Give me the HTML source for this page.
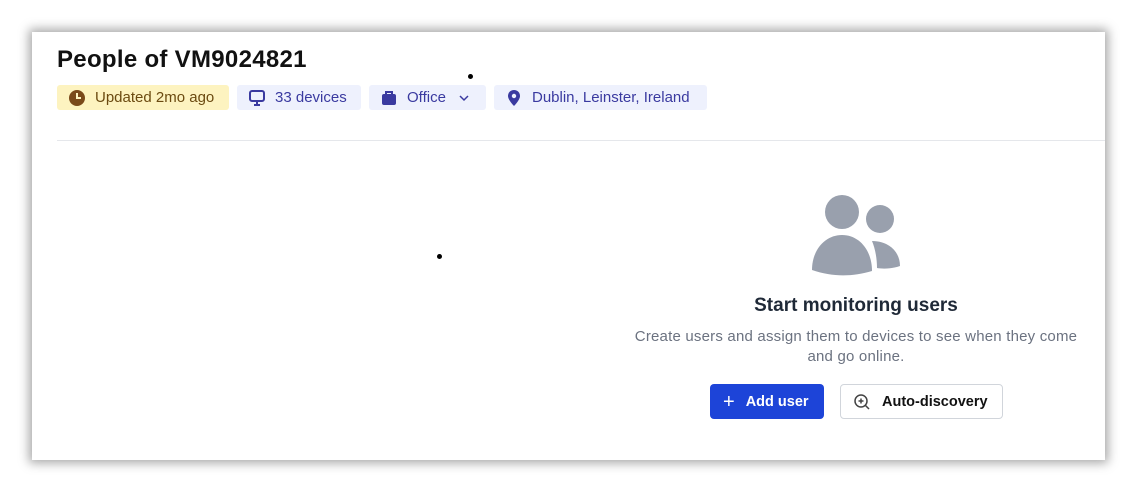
<!DOCTYPE html>
<html><head><style>
*{margin:0;padding:0;box-sizing:border-box}
body{width:1137px;height:492px;background:#fff;font-family:"Liberation Sans",sans-serif;position:relative;overflow:hidden}
.card{position:absolute;left:32px;top:32px;width:1073px;height:428px;background:#fff;box-shadow:0 0 10px 3px rgba(0,0,0,.35)}
h1{position:absolute;left:57px;top:46px;font-size:24px;font-weight:bold;color:#111;letter-spacing:0.3px}
.b{position:absolute;top:85px;height:25px;border-radius:3px;background:#eef1fd;color:#3a3aa0;font-size:15px;line-height:26px;padding-left:38px}
.b svg{position:absolute;left:11px;top:4px}
.hr{position:absolute;left:57px;top:140px;width:1048px;height:1px;background:#e5e7eb}
.dot{position:absolute;width:5px;height:5px;border-radius:50%;background:#000}
.t{position:absolute;left:610px;width:492px;text-align:center}
.btn{position:absolute;top:384px;height:35px;border-radius:4px;font-size:14.5px;font-weight:bold;line-height:36px}
</style></head><body>
<div class="card"></div>
<h1>People of VM9024821</h1>
<div class="b" style="left:57px;width:172px;background:#fdf3c0;color:#6b4a10">
<svg width="18" height="18" viewBox="0 0 18 18"><circle cx="9" cy="9" r="8" fill="#7a4a1a"/><path d="M9 4v5h4" stroke="#fdf3c0" stroke-width="2" fill="none"/></svg>Updated 2mo ago</div>
<div class="b" style="left:237px;width:124px">
<svg width="18" height="18" viewBox="0 0 18 18"><rect x="2" y="2" width="14" height="10" rx="2" fill="none" stroke="#3a3aa0" stroke-width="2"/><path d="M6 16h6M9 12v4" stroke="#3a3aa0" stroke-width="2"/></svg>33 devices</div>
<div class="b" style="left:369px;width:117px">
<svg width="18" height="18" viewBox="0 0 18 18"><rect x="2" y="5" width="14" height="11" rx="2" fill="#3a3aa0"/><path d="M6 5V3h6v2" stroke="#3a3aa0" stroke-width="2" fill="none"/></svg>Office
<svg style="left:89px;top:8px" width="12" height="10" viewBox="0 0 12 10"><path d="M2 3l4 4 4-4" stroke="#3a3aa0" stroke-width="1.5" fill="none"/></svg></div>
<div class="b" style="left:494px;width:213px">
<svg width="18" height="18" viewBox="0 0 18 18"><path d="M9 1C5.5 1 3 3.6 3 7c0 4 6 10 6 10s6-6 6-10c0-3.4-2.5-6-6-6z" fill="#3a3aa0"/><circle cx="9" cy="7" r="2.2" fill="#eef1fd"/></svg>Dublin, Leinster, Ireland</div>
<div class="dot" style="left:468px;top:74px"></div>
<div class="dot" style="left:437px;top:254px"></div>
<div class="hr"></div>
<svg style="position:absolute;left:810px;top:192px" width="94" height="84" viewBox="810 192 94 84">
<circle cx="842" cy="212" r="17" fill="#99a0ad"/><circle cx="880" cy="219" r="14" fill="#99a0ad"/>
<path d="M812 270c0-20 13-35 30-35s30 15 30 36c-20 6-40 6-60-1z" fill="#99a0ad"/>
<path d="M872 241c16 0 28 10 28 25-8 3-18 3-23 2 0-10-2-20-5-27z" fill="#99a0ad"/>
</svg>
<div class="t" style="top:295px;font-size:19px;font-weight:bold;color:#1f2937">Start monitoring users</div>
<div class="t" style="top:327px;font-size:15px;line-height:20px;color:#6b7280;left:600px;width:512px;letter-spacing:0.2px">Create users and assign them to devices to see when they come<br>and go online.</div>
<div class="btn" style="left:710px;width:114px;background:#1d44d8;color:#fff;padding-left:13px"><span style="font-size:20px;font-weight:normal;vertical-align:-2px;margin-right:11px">+</span>Add user</div>
<div class="btn" style="left:840px;width:163px;border:1px solid #d1d5db;color:#111;padding-left:41px;line-height:34px">
<svg style="position:absolute;left:12px;top:8px" width="18" height="18" viewBox="0 0 18 18"><circle cx="8" cy="8" r="6" fill="none" stroke="#444" stroke-width="1.5"/><path d="M12.5 12.5L16 16M8 5.5v5M5.5 8h5" stroke="#444" stroke-width="1.5"/></svg>Auto-discovery</div>
</body></html>
